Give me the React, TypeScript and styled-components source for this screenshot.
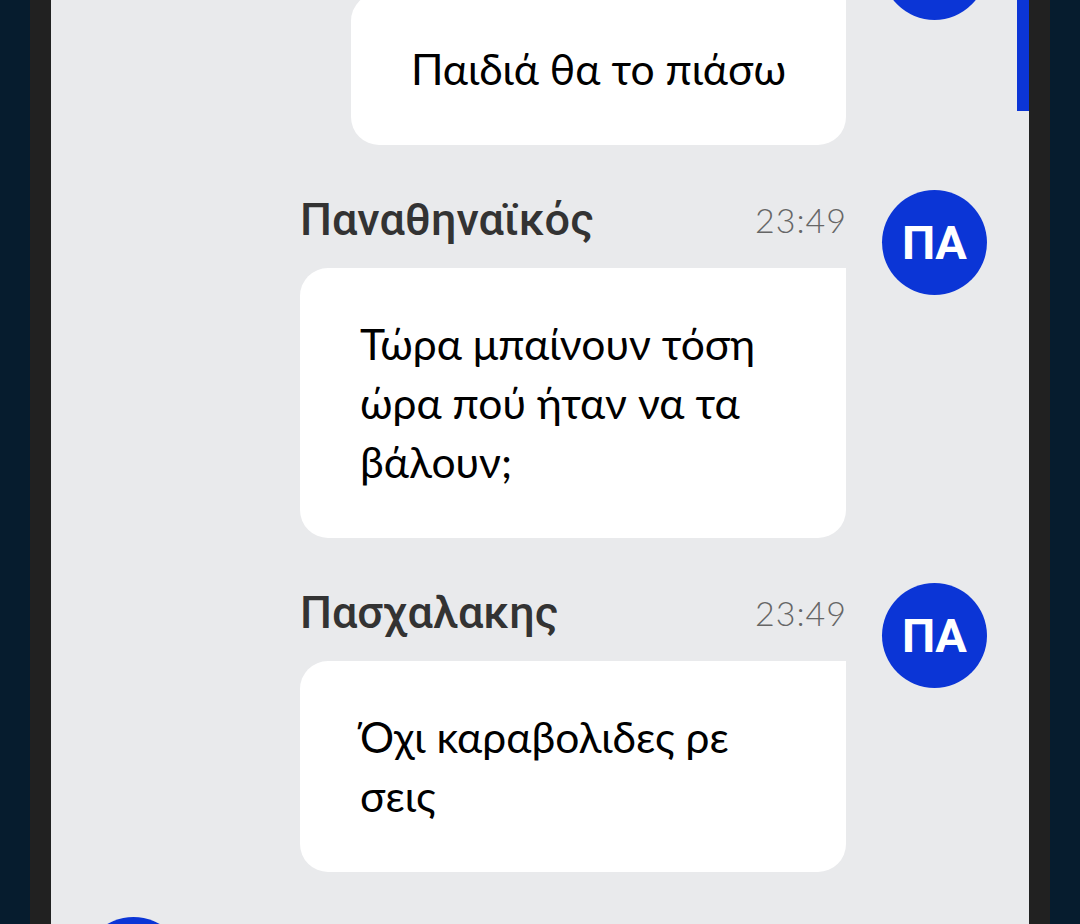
import React from 'react';
import styled, {createGlobalStyle} from 'styled-components';

interface ChatMessage {
    readonly id: number;
    readonly name?: string;
    readonly time?: string;
    readonly text?: string;
    readonly incoming?: boolean;
}

const messages: ChatMessage[] = [
    {id: 1, text: 'Παιδιά θα το πιάσω'},
    {id: 2, name: 'Παναθηναϊκός', time: '23:49', text: 'Τώρα μπαίνουν τόση ώρα πού ήταν να τα βάλουν;'},
    {id: 3, name: 'Πασχαλακης', time: '23:49', text: 'Όχι καραβολιδες ρε σεις'},
    {id: 4, incoming: true},
];

const GlobalStyle = createGlobalStyle`
  html, body {
    margin: 0;
    padding: 0;
    height: 924px;
    overflow: hidden;
    background: #061c2e;
  }
`;

const Screen = styled.div`
  height: 924px;
  padding: 0 30px;
  box-sizing: border-box;
  background: #061c2e;
`;

const Frame = styled.div`
  height: 100%;
  padding: 0 21px;
  background: #212121;
`;

const Chat = styled.div`
  position: relative;
  height: 100%;
  overflow: hidden;
  background: #e9eaec;
`;

const ScrollThumb = styled.div`
  position: absolute;
  top: 0;
  right: 0;
  width: 12px;
  height: 111px;
  background: #0b35d6;
`;

const List = styled.div`
  display: flex;
  flex-direction: column;
  gap: 45px;
  margin-top: -84.7px;
  padding: 0 42px 0 30px;
`;

const Row = styled.div<{$incoming?: boolean}>`
  display: flex;
  flex-direction: ${p => (p.$incoming ? 'row-reverse' : 'row')};
  justify-content: flex-end;
  gap: 36px;
`;

const Content = styled.div`
  display: flex;
  flex-direction: column;
  align-items: flex-end;
  width: 546px;
`;

const Header = styled.div`
  display: flex;
  justify-content: space-between;
  align-items: center;
  align-self: stretch;
  height: 77.7px;
  padding-bottom: 18px;
  box-sizing: border-box;
`;

const Name = styled.span`
  font: 500 45px/60px Roboto, sans-serif;
  color: #333333;
`;

const Time = styled.span`
  font: 300 34px/60px Lato, sans-serif;
  letter-spacing: 1px;
  margin-right: -1px;
  color: #666666;
`;

const Bubble = styled.div`
  max-width: 546px;
  box-sizing: border-box;
  padding: 46px 60px 46.7px;
  border-radius: 28px 0 28px 28px;
  background: #ffffff;
  font: 400 42.6px/59.3px Lato, sans-serif;
  color: #000000;
`;

const Avatar = styled.div`
  display: flex;
  align-items: center;
  justify-content: center;
  flex: none;
  width: 105px;
  height: 105px;
  border-radius: 50%;
  background: #0b35d6;
  font: 700 47px/1 Roboto, sans-serif;
  color: #ffffff;
`;

export default function App() {
    return (
        <Screen>
            <GlobalStyle/>
            <Frame>
                <Chat>
                    <List>
                        {messages.map(m => (
                            <Row key={m.id} $incoming={m.incoming}>
                                {m.text && (
                                    <Content>
                                        <Header>
                                            <Name>{m.name}</Name>
                                            <Time>{m.time}</Time>
                                        </Header>
                                        <Bubble>{m.text}</Bubble>
                                    </Content>
                                )}
                                <Avatar>ΠΑ</Avatar>
                            </Row>
                        ))}
                    </List>
                    <ScrollThumb/>
                </Chat>
            </Frame>
        </Screen>
    );
}
